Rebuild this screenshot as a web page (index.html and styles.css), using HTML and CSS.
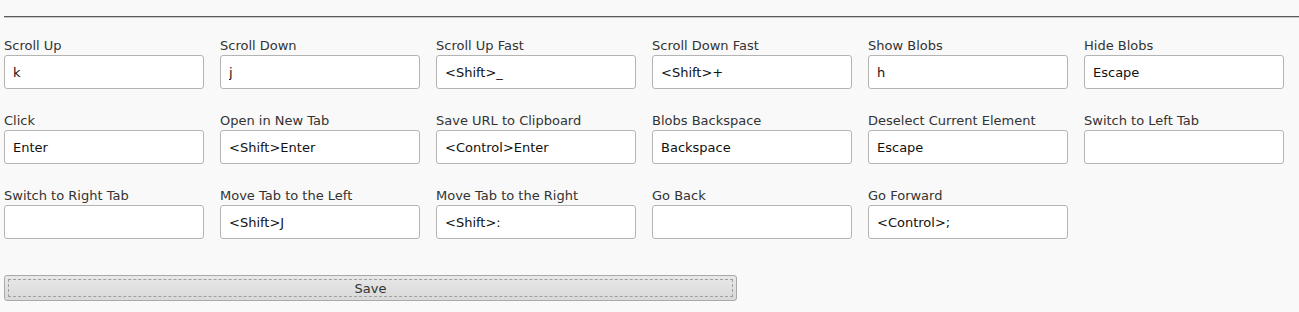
FILE: index.html
```html
<!DOCTYPE html>
<html>

<head>
    <title>Keybindings</title>
    <link rel="stylesheet" href="styles.css">
</head>

<body>

    <hr class="topline">

    <div class="bindings">
        <div class="field">
            <label for="scrollUp">Scroll Up</label>
            <input type="text" id="scrollUp" value="k">
        </div>
        <div class="field">
            <label for="scrollDown">Scroll Down</label>
            <input type="text" id="scrollDown" value="j">
        </div>
        <div class="field">
            <label for="scrollUpFast">Scroll Up Fast</label>
            <input type="text" id="scrollUpFast" value="<Shift>_">
        </div>
        <div class="field">
            <label for="scrollDownFast">Scroll Down Fast</label>
            <input type="text" id="scrollDownFast" value="<Shift>+">
        </div>
        <div class="field">
            <label for="showBlobs">Show Blobs</label>
            <input type="text" id="showBlobs" value="h">
        </div>
        <div class="field">
            <label for="hideBlobs">Hide Blobs</label>
            <input type="text" id="hideBlobs" value="Escape">
        </div>

        <div class="field">
            <label for="click">Click</label>
            <input type="text" id="click" value="Enter">
        </div>
        <div class="field">
            <label for="openNewTab">Open in New Tab</label>
            <input type="text" id="openNewTab" value="<Shift>Enter">
        </div>
        <div class="field">
            <label for="saveUrl">Save URL to Clipboard</label>
            <input type="text" id="saveUrl" value="<Control>Enter">
        </div>
        <div class="field">
            <label for="blobsBackspace">Blobs Backspace</label>
            <input type="text" id="blobsBackspace" value="Backspace">
        </div>
        <div class="field">
            <label for="deselect">Deselect Current Element</label>
            <input type="text" id="deselect" value="Escape">
        </div>
        <div class="field">
            <label for="leftTab">Switch to Left Tab</label>
            <input type="text" id="leftTab" value="">
        </div>

        <div class="field">
            <label for="rightTab">Switch to Right Tab</label>
            <input type="text" id="rightTab" value="">
        </div>
        <div class="field">
            <label for="moveLeft">Move Tab to the Left</label>
            <input type="text" id="moveLeft" value="<Shift>J">
        </div>
        <div class="field">
            <label for="moveRight">Move Tab to the Right</label>
            <input type="text" id="moveRight" value="<Shift>:">
        </div>
        <div class="field">
            <label for="goBack">Go Back</label>
            <input type="text" id="goBack" value="">
        </div>
        <div class="field">
            <label for="goForward">Go Forward</label>
            <input type="text" id="goForward" value="<Control>;">
        </div>
    </div>

    <button class="savebtn">Save</button>

</body>

</html>
```

FILE: styles.css
```css
* {
    box-sizing: border-box
}

body {
    margin: 0;
    padding: 0 0 0 4px;
    background-color: #f9f9f9;
    font-family: "DejaVu Sans", sans-serif;
    font-size: 13px;
    color: #333;
}

.topline {
    margin: 16px 0 0 0;
    height: 2px;
    border: none;
    border-top: 1px solid #5a5a5a;
    border-bottom: 1px solid #c8c8c8;
}

.bindings {
    display: grid;
    grid-template-columns: repeat(6, 200px);
    column-gap: 16px;
    row-gap: 24px;
    margin-top: 20px;
}

.field label {
    display: block;
    line-height: 15px;
    margin-bottom: 2px;
    color: #333;
}

.field input {
    display: block;
    width: 200px;
    height: 34px;
    padding: 0 8px;
    border: 1px solid #b4b4b4;
    border-radius: 3px;
    background: #fff;
    font-family: "DejaVu Sans", sans-serif;
    font-size: 13px;
    color: #111;
}

.field input:focus {
    outline: none;
    border-color: #888;
}

.savebtn {
    display: block;
    width: 733px;
    height: 26px;
    margin-top: 36px;
    border: 1px solid #a9a9a9;
    border-radius: 3px;
    background: linear-gradient(#e8e8e8, #d9d9d9);
    font-family: "DejaVu Sans", sans-serif;
    font-size: 13px;
    color: #333;
    outline: 1px dashed #a0a0a0;
    outline-offset: -5px;
    cursor: pointer;
}
```
